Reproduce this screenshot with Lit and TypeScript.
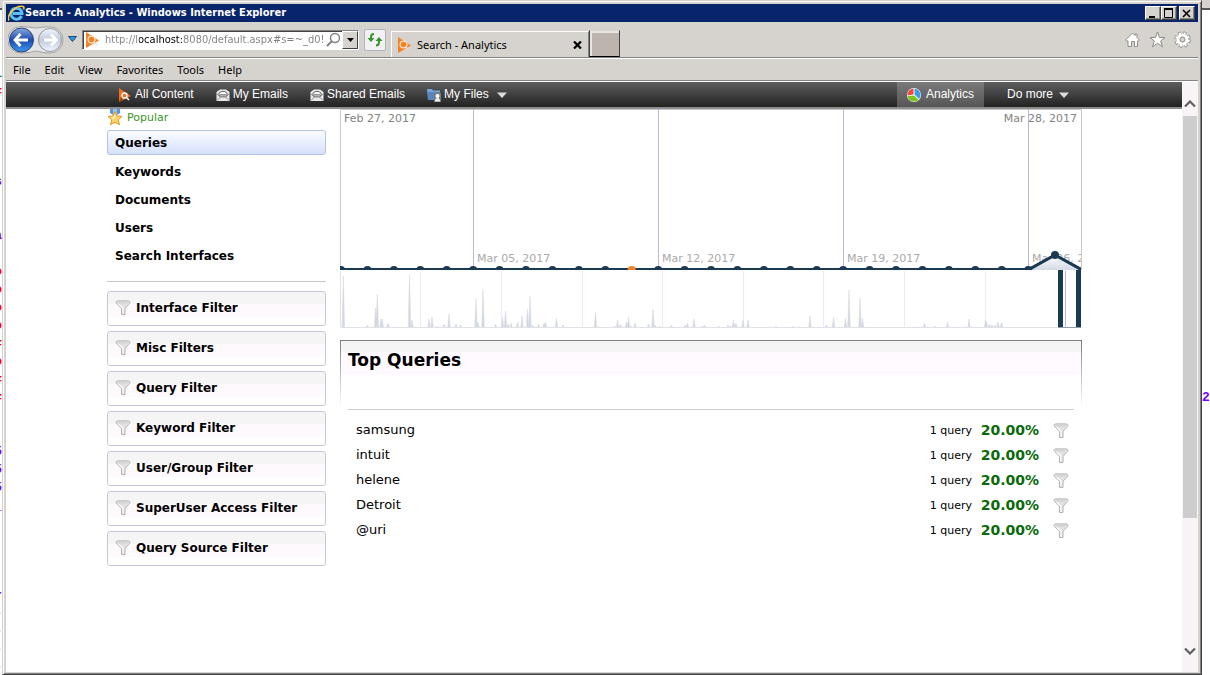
import { LitElement, html, svg, css } from "lit";
import { customElement, property } from "lit/decorators.js";

const base = css`
  *, *::before, *::after { box-sizing: border-box; }
  a { color: inherit; text-decoration: none; }
  button { font: inherit; color: inherit; border: 0; padding: 0; margin: 0; background: none; cursor: pointer; }
  svg { display: block; flex: none; }
  ul { list-style: none; margin: 0; padding: 0; }
`;

const brandMark = svg`
  <svg width="16" height="16" viewBox="0 0 16 16" aria-hidden="true">
    <path d="M1 0 L1 16 L14 8.5 Z" fill="#f58220"/>
    <circle cx="6.5" cy="7.5" r="3.4" fill="#f58220" stroke="#fde6d2" stroke-width="1.2"/>
    <path d="M9.500 5.500 Q12 7.500 9.500 9.500" fill="none" stroke="#f7c9a0"/>
    <path d="M9 10 L12 13" stroke="#ddd" stroke-width="1.3"/>
  </svg>`;

const funnel = svg`
  <svg width="16" height="16" viewBox="0 0 16 16" aria-hidden="true">
    <path d="M1 2.2 Q1 1 3 .9 L13 .9 Q15 1 15 2.2 Q14.6 4 10 8.2 L10 14.5 L6.5 14.5 L6.5 8.2 Q1.4 4 1 2.2 Z" fill="#e2e2e2" stroke="#b4b4b4"/>
    <path d="M3 2.2 L13 2.2 L11.5 3.6 L4.6 3.6 Z" fill="#cfcfcf"/>
    <path d="M3.6 4.4 L8 8 L8 13.4" fill="none" stroke="#fff" stroke-width="1.1"/>
  </svg>`;

const mailIcon = svg`
  <svg width="14" height="14" viewBox="0 0 14 14" aria-hidden="true">
    <path d="M.5 4 L4 1.5 H10 L13.5 4 V13 H.5 Z" fill="#e9e9e9"/>
    <path d="M3 5 Q7 1.6 11 5 V8 H3 Z" fill="#fff" stroke="#555" stroke-width=".9"/>
    <path d="M4 6.5 H10" stroke="#777" stroke-width=".8"/>
    <path d="M1 6 L4.5 9 L1 12.5 M13 6 L9.500 9 L13 12.5 M4.500 9 H9.500" fill="none" stroke="#777" stroke-width=".8"/>
  </svg>`;

const caret = svg`
  <svg width="10" height="6" viewBox="0 0 10 6" aria-hidden="true"><path d="M0 .5 H10 L5 6 Z" fill="#dcdcdc"/></svg>`;

const SPIKES: [number, number][] = [
  [3.3, 52], [27.5, 3], [35.6, 20], [37.3, 34], [41, 9], [42.3, 9], [48, 5], [69.5, 53], [72, 8], [89, 9], [92, 11],
  [97, 2], [104, 4], [109, 14], [116, 4], [120.5, 3], [136, 29], [138, 6], [143, 39], [155.5, 4], [162.500, 11],
  [165.500, 17], [168, 4], [171, 5], [177.500, 6], [182, 12], [187.500, 19], [190, 32], [193, 3], [198.500, 4], [204, 5],
  [205.500, 6], [216.500, 10], [223, 3], [252, 1], [255.500, 16], [275, 2], [277.500, 8], [280.500, 4], [286.500, 6],
  [288.500, 11], [291, 2], [295, 5], [308.500, 4], [313, 19], [315, 3], [319.500, 2], [331.500, 3], [345, 3],
  [347.500, 5], [354, 9], [362.500, 2], [364.500, 3], [379, 2], [388, 3], [390.500, 2], [393.500, 8], [396, 5],
  [403, 8], [408, 8], [436, 2], [452.500, 2], [459, 1], [470, 12], [486.500, 3], [493.500, 11], [505.500, 10],
  [509, 38], [520, 30], [522.500, 10], [526, 1], [579, 1], [584.500, 5], [588, 1], [595, 2], [607.500, 6], [625, 1],
  [629, 9], [645.500, 8], [646.500, 7], [649.500, 4], [652, 3], [655, 3], [658, 6], [661.500, 6],
];

@customElement("trend-chart")
class TrendChart extends LitElement {
  static styles = [base, css`
    :host { display: block; }
    .chart { width: 100%; height: auto; }
    .date { font: 11px "DejaVu Sans", Verdana, sans-serif; fill: #aaa; }
    .range { fill: #828282; }
  `];

  render() {
    const day = (k: number) => 1 + k * 26.43;
    const weeks: [number, string][] = [[5, "Mar 05, 2017"], [12, "Mar 12, 2017"], [19, "Mar 19, 2017"], [26, "Mar 26, 2017"]];
    const days = Array.from({ length: 27 }, (_, k) => k);
    return html`
      <svg class="chart" viewBox="0 0 742 219" role="img" aria-label="Queries per day">
        <defs>
          <clipPath id="plot"><rect x="0" y="0" width="741" height="161"/></clipPath>
          <linearGradient id="area" x1="0" y1="0" x2="0" y2="1">
            <stop offset="0" stop-color="#fff"/><stop offset="1" stop-color="#ccd4e0"/>
          </linearGradient>
        </defs>
        <path d="M.5 161 V.5 H741.5 V161" fill="none" stroke="#c8c8c8"/>
        <g clip-path="url(#plot)">
          ${weeks.map(([k, label]) => svg`
            <rect x=${Math.round(day(k))} y="0" width="1" height="160" fill="#bdb4e4"/>
            <text class="date" x=${Math.round(day(k)) + 4} y="153">${label}</text>`)}
          <path d="M689 161 L715 146 L741 161 Z" fill="url(#area)" fill-opacity=".85"/>
          <path d="M0 160 H689 L715 146 L741 160" fill="none" stroke="#1a3a54" stroke-width="2"/>
          <path d="M688 161 L715 146 L742 161" fill="none" stroke="#1a3a54" stroke-width="3"/>
          ${days.map((k) => svg`<circle cx=${day(k)} cy="161" r="4" fill=${k === 11 ? "#f58220" : "#1a3a54"}/>`)}
          <circle cx="715" cy="146" r="4" fill="#1a3a54"/>
        </g>
        <text class="date range" x="4" y="13">Feb 27, 2017</text>
        <text class="date range" x="737" y="13" text-anchor="end">Mar 28, 2017</text>
        ${[80, 161, 242, 322, 403, 483, 564, 645].map((x) => svg`<rect x=${x} y="162" width="1" height="57" fill="#ebe9fb"/>`)}
        <path d=${SPIKES.map(([x, h]) => `M${x - 1.3} 218.500 L${x} ${219 - h} L${x + 1.3} 218.500 Z`).join(" ")}
          fill="#d5d9e0" stroke="#d5d9e0" stroke-width=".5"/>
        <path d="M.5 162 V218.5 H718" fill="none" stroke="#e0e2e8"/>
        <rect x="725" y="162" width="1" height="57" fill="#bdb4e4"/>
        <rect x="718" y="161" width="5" height="58" fill="#1a3a54"/>
        <rect x="736" y="161" width="5" height="58" fill="#1a3a54"/>
        <path d="M718 218.500 H741" stroke="#8d9cab"/>
      </svg>`;
  }
}

@customElement("analytics-sidebar")
class AnalyticsSidebar extends LitElement {
  static styles = [base, css`
    :host { display: block; font: bold 12px/18px "DejaVu Sans", Verdana, sans-serif; }
    .popular { display: flex; align-items: center; gap: 4px; height: 17px; color: #3c9628; font: 11px/17px "DejaVu Sans", Verdana, sans-serif; }
    .views { margin-top: 4px; padding-bottom: 11px; border-bottom: 1px solid #c4c8d8; }
    .view { display: flex; align-items: center; height: 28px; padding: 0 8px; }
    .view.current { height: 25px; margin-bottom: 3px; padding: 0 7px; border: 1px solid #b4c2e4; border-radius: 3px; background: linear-gradient(#fbfcff, #d5e0fc); }
    .filters { display: grid; gap: 5px; margin-top: 9px; }
    .filter { display: flex; align-items: center; gap: 5px; width: 100%; height: 35px; padding: 0 7px 2px; border: 1px solid #c4c8d8; border-radius: 3px;
      background: linear-gradient(#f5f5f5 0 36%, #fdf9fd 36% 75%, #fff 75%); }
  `];

  render() {
    const views = ["Queries", "Keywords", "Documents", "Users", "Search Interfaces"];
    const filters = ["Interface Filter", "Misc Filters", "Query Filter", "Keyword Filter", "User/Group Filter", "SuperUser Access Filter", "Query Source Filter"];
    return html`
      <div class="popular">
        <svg width="16" height="17" viewBox="0 0 16 17" aria-hidden="true">
          <path d="M3 0 H13 V4 L8 7 L3 4 Z" fill="#5b93cc"/><path d="M6 0 H10 V5 H6 Z" fill="#9cc4ea"/>
          <path d="M8 2.500 L10 7 L15 7.500 L11.300 10.800 L12.500 15.800 L8 13.200 L3.500 15.800 L4.700 10.800 L1 7.500 L6 7 Z" fill="#fdd368" stroke="#e09a2c"/>
          <path d="M8 4.500 L8.800 8 L6 10.500 L4 8 L6.800 7.800 Z" fill="#fff0b8"/>
        </svg>
        Popular
      </div>
      <ul class="views">
        ${views.map((v, i) => html`<li><a class="view ${i === 0 ? "current" : ""}" href="#">${v}</a></li>`)}
      </ul>
      <div class="filters">
        ${filters.map((f) => html`<button class="filter">${funnel}<span>${f}</span></button>`)}
      </div>`;
  }
}

@customElement("top-queries")
class TopQueries extends LitElement {
  static styles = [base, css`
    :host { display: block; font: 13px/25px "DejaVu Sans", Verdana, sans-serif; }
    .head { height: 70px; padding: 0 8px; border-top: 1px solid #7d7d7d;
      background:
        linear-gradient(#7d7d7d, #fff) left top / 1px 66px no-repeat,
        linear-gradient(#7d7d7d, #fff) right top / 1px 66px no-repeat,
        linear-gradient(#f5f5f5 0 11px, #fefaff 11px 34px, #fff 34px); }
    .title { height: 69px; margin: 0; border-bottom: 1px solid #cfcfcf; font: bold 17px/38px "DejaVu Sans", Verdana, sans-serif; }
    .rows { width: 100%; margin-top: 8px; border-collapse: collapse; }
    .rows td { height: 25px; padding: 0; }
    .rows .query { padding: 0 0 2px 16px; line-height: 23px; }
    .rows .count { font-size: 11px; text-align: right; }
    .rows .share { width: 67px; font-size: 14px; font-weight: bold; text-align: right; color: #0a6a0a; }
    .rows .action { width: 43px; padding-left: 14px; }
    .action button { display: block; }
  `];

  render() {
    return html`
      <div class="head"><h2 class="title">Top Queries</h2></div>
      <table class="rows">
        <tbody>
          ${["samsung", "intuit", "helene", "Detroit", "@uri"].map((q) => html`
            <tr>
              <td class="query">${q}</td>
              <td class="count">1 query</td>
              <td class="share">20.00%</td>
              <td class="action"><button aria-label="Filter by ${q}">${funnel}</button></td>
            </tr>`)}
        </tbody>
      </table>`;
  }
}

@customElement("site-nav")
class SiteNav extends LitElement {
  static styles = [base, css`
    :host { display: block; border-bottom: 2px solid #8e8c8c; background: linear-gradient(#5e5e5e, #222); font: 12px/25px "Liberation Sans", Arial, sans-serif; color: #fff; }
    .inner { display: flex; align-items: stretch; max-width: 976px; height: 25px; margin: 0 auto; padding: 0 13px 0 12px; }
    .item { display: flex; align-items: center; gap: 3px; margin-right: 22px; }
    .item.menu { gap: 3px; }
    .menu .label { padding-right: 5px; }
    .spacer { flex: 1; }
    .item.active { gap: 5px; margin-right: 23px; padding: 0 10px; background: linear-gradient(#7a7a7a, #565656); }
    .more { display: flex; align-items: center; gap: 6px; }
    .item .label { padding-bottom: 1px; }
  `];

  render() {
    return html`
      <nav class="inner">
        <a class="item" href="#">
          <svg width="14" height="14" viewBox="0 0 14 14" aria-hidden="true">
            <path d="M1 0 V14 L13 8 Z" fill="#f07020"/><path d="M1 14 L5 12 L3 9 Z" fill="#a83c08"/>
            <circle cx="6.500" cy="7.500" r="2.500" fill="#f07020" stroke="#fff" stroke-width="1.300"/><path d="M8.500 9.500 L11 12" stroke="#fff" stroke-width="1.500"/>
          </svg>
          <span class="label">All Content</span></a>
        <a class="item" href="#">${mailIcon}<span class="label">My Emails</span></a>
        <a class="item" href="#">${mailIcon}<span class="label">Shared Emails</span></a>
        <a class="item menu" href="#">
          <svg width="14" height="14" viewBox="0 0 14 14" aria-hidden="true">
            <path d="M0 1 H5 L6 2.500 H13 V12 H1 Z" fill="#7ba4d4"/><path d="M1 4 H13 V12 H1 Z" fill="#5585c0"/>
            <rect x="7" y="5" width="7" height="9" fill="#7c7c7c"/><circle cx="10.500" cy="8" r="2" fill="#fff"/><path d="M8 13.500 Q8 10 10.500 10 Q13 10 13 13.500 Z" fill="#f2f2f2"/>
          </svg>
          <span class="label">My Files</span>${caret}</a>
        <span class="spacer"></span>
        <a class="item active" href="#">
          <svg width="14" height="14" viewBox="0 0 14 14" aria-hidden="true">
            <circle cx="7" cy="7" r="7" fill="#fff"/>
            <path d="M6.500 6.500 V.5 A6.500 6.500 0 0 0 .5 7.500 Z" fill="#ee4a38"/>
            <path d="M7.500 6.500 V.5 A6.500 6.500 0 0 1 12 11 Z" fill="#3f9be8"/>
            <path d="M.6 8.300 L7 7.500 L11.500 11.700 A6.500 6.500 0 0 1 .6 8.300 Z" fill="#7cc41c"/>
          </svg>
          <span class="label">Analytics</span></a>
        <a class="more" href="#"><span class="label">Do more</span>${caret}</a>
      </nav>`;
  }
}

@customElement("browser-chrome")
class BrowserChrome extends LitElement {
  static styles = [base, css`
    :host { display: block; font: 11px/14px "Tahoma", "Noto Sans", sans-serif; color: #000; background: #d6d3ce; }
    .title { display: flex; align-items: center; height: 18px; padding: 0 3px 0 2px; background: #08246b; color: #fff; }
    .title h1 { flex: 1; margin: 0; font: bold 11px/14px Tahoma, "DejaVu Sans Condensed", "DejaVu Sans", sans-serif; }
    .wbtn { width: 16px; height: 14px; border: 1px solid; border-color: #fff #424142 #424142 #fff; background: #d6d3ce; box-shadow: inset -1px -1px #848284; }
    .wbtn.close { margin-left: 2px; }
    .bar { display: flex; align-items: center; height: 36px; padding: 0 7px 0 2px; border-bottom: 1px solid #848284; }
    .travel { display: flex; }
    .hist { margin-left: 2px; }
    .address { display: flex; align-items: center; width: 277px; height: 20px; margin-left: 5px; padding-left: 2px; border: 1px solid; border-color: #848284 #fff #fff #848284; background: #fff; box-shadow: inset 1px 1px #424142; }
    .url { flex: 1; min-width: 0; height: 16px; margin-left: 4px; border: 0; padding: 0; outline: 0; font: 11px/16px Tahoma, "DejaVu Sans Condensed", "DejaVu Sans", sans-serif;
      background: linear-gradient(90deg, #808080 34px, #000 34px 77px, #808080 77px); -webkit-background-clip: text; background-clip: text; -webkit-text-fill-color: transparent; }
    .drop { display: grid; place-items: center; width: 16px; height: 18px; border: 1px solid; border-color: #fff #424142 #424142 #fff; background: #d6d3ce; }
    .refresh { display: grid; place-items: center; width: 22px; height: 22px; margin: 0 5px; border: 1px solid #b4b2b8; border-radius: 2px; background: #f2f1f4; }
    .tab { display: flex; align-items: center; gap: 4px; align-self: flex-end; width: 198px; height: 26px; padding: 0 6px 0 5px; border: 1px solid #fff; border-right-color: #848284; border-bottom: 0; }
    .tab a { flex: 1; }
    .newtab { align-self: flex-end; width: 31px; height: 27px; border: 1px solid; border-color: #d6d3ce #424142 #000 #424142; background: #bdb5ad; box-shadow: inset 2px 2px #e8e6e2; }
    .tools { display: flex; gap: 8px; margin-left: auto; }
    .menu { display: flex; gap: 14px; height: 24px; padding: 0 7px; border-top: 1px solid #fff; border-bottom: 1px solid #fff; line-height: 22px; box-shadow: inset 0 -1px #848284; }
  `];

  @property() heading = "";

  render() {
    return html`
      <header class="title">
        <svg width="17" height="17" viewBox="0 0 17 17" aria-hidden="true">
          <path d="M13.500 11 A5.500 5.500 0 1 1 14 8.500 H5" fill="none" stroke="#5cc0f4" stroke-width="3"/>
          <path d="M1 15.500 C-2 10 8 0 15 1.500 Q16.500 2 15.500 4.500" fill="none" stroke="#f8c838" stroke-width="1.600"/>
        </svg>
        <h1>${this.heading} - Windows Internet Explorer</h1>
        <button class="wbtn" aria-label="Minimize"><svg width="13" height="11"><rect x="3" y="8" width="6" height="2"/></svg></button>
        <button class="wbtn" aria-label="Maximize"><svg width="13" height="11"><path d="M2.500 1 V9.500 H10.500 V1" fill="none" stroke="#000"/><rect x="2" y="0" width="9" height="2"/></svg></button>
        <button class="wbtn close" aria-label="Close"><svg width="13" height="11"><path d="M3 2 L10 9 M10 2 L3 9" stroke="#000" stroke-width="1.600"/></svg></button>
      </header>
      <div class="bar">
        <div class="travel">
          <svg width="58" height="28" viewBox="0 0 58 28" role="img" aria-label="Back and forward">
            <defs>
              <linearGradient id="bk" x1="0" y1="0" x2="0" y2="1"><stop offset="0" stop-color="#8aa8e0"/><stop offset=".5" stop-color="#1c4cb0"/><stop offset="1" stop-color="#3c98ec"/></linearGradient>
              <linearGradient id="fw" x1="0" y1="0" x2="0" y2="1"><stop offset="0" stop-color="#f4f6fa"/><stop offset=".5" stop-color="#c0cad8"/><stop offset="1" stop-color="#f0f6fc"/></linearGradient>
            </defs>
            <path d="M13 .5 Q22 1 28 2 Q35 1 42 .8 A13 13 0 0 1 42 27 Q35 27 28 25 Q22 27 13 27 A13 13 0 0 1 13 .5 Z" fill="#e4e4e6" stroke="#a4a2a2"/>
            <circle cx="13.500" cy="14" r="12" fill="url(#bk)" stroke="#284478"/>
            <path d="M7 14 H20 M12.500 8 L7 14 L12.500 20" fill="none" stroke="#fff" stroke-width="2.800"/>
            <circle cx="42" cy="14" r="11.500" fill="url(#fw)" stroke="#9098a4"/>
            <path d="M36 14 H48 M43 8.500 L48.500 14 L43 19.500" fill="none" stroke="#fff" stroke-width="2.800"/>
          </svg>
        </div>
        <button class="hist" aria-label="Recent pages"><svg width="9" height="7" viewBox="0 0 9 7"><path d="M.5 .5 H8.500 L4.500 5.500 Z" fill="#2c9ce0" stroke="#184878"/></svg></button>
        <div class="address">
          ${brandMark}
          <input class="url" aria-label="Address" value="http://localhost:8080/default.aspx#s=~_d0!">
          <svg width="16" height="16" viewBox="0 0 16 16" aria-hidden="true"><circle cx="9" cy="6" r="4.500" fill="none" stroke="#848284" stroke-width="1.500"/><path d="M5.500 9.500 L1 14" stroke="#848284" stroke-width="2.200"/></svg>
          <button class="drop" aria-label="Show address history"><svg width="7" height="4"><path d="M0 0 H7 L3.500 4 Z"/></svg></button>
        </div>
        <button class="refresh" aria-label="Refresh">
          <svg width="16" height="16" viewBox="0 0 16 16"><path d="M7 2 Q4 2 4 5 V7 M9 13.500 Q12 13.500 12 10 V8" fill="none" stroke="#34942c" stroke-width="2"/><path d="M.5 6 H7.500 L4 10 Z M8.500 9 H15.500 L12 5 Z" fill="#34942c"/></svg>
        </button>
        <div class="tab">
          ${brandMark}
          <a href="#">${this.heading}</a>
          <button aria-label="Close tab"><svg width="9" height="8" viewBox="0 0 9 8"><path d="M1 .5 L8 7.500 M8 .5 L1 7.500" stroke="#000" stroke-width="2.200"/></svg></button>
        </div>
        <button class="newtab" aria-label="New tab"></button>
        <div class="tools">
          <button aria-label="Home"><svg width="17" height="17" viewBox="0 0 17 17"><path d="M1.500 9 L8.500 2 L11 4.500 V3 H13 V6.500 L15.500 9 L14.500 10 H13.500 V15.500 H10.500 V10.500 H7.500 V15.500 H4 V10 H2.500 Z" fill="#fff" stroke="#8c8a8a"/></svg></button>
          <button aria-label="Favorites"><svg width="17" height="17" viewBox="0 0 17 17"><path d="M8.500 1 L10.500 6.500 H16 L11.700 10 L13.500 15.800 L8.500 12.300 L3.500 15.800 L5.300 10 L1 6.500 H6.500 Z" fill="#fff" stroke="#8c8a8a"/></svg></button>
          <button aria-label="Settings"><svg width="17" height="17" viewBox="0 0 17 17">
            <circle cx="8.500" cy="8.500" r="6.500" fill="none" stroke="#8c8a8a" stroke-width="3.500" stroke-dasharray="3 2.105"/>
            <circle cx="8.500" cy="8.500" r="6.300" fill="none" stroke="#fff" stroke-width="2.200" stroke-dasharray="2 2.948" stroke-dashoffset="-.5"/>
            <circle cx="8.500" cy="8.500" r="4.200" fill="#d6d3ce" stroke="#fff" stroke-width="3"/><circle cx="8.500" cy="8.500" r="2.500" fill="#d6d3ce" stroke="#8c8a8a"/></svg></button>
        </div>
      </div>
      <nav class="menu">
        ${["File", "Edit", "View", "Favorites", "Tools", "Help"].map((m) => html`<button>${m}</button>`)}
      </nav>`;
  }
}

@customElement("app-root")
class AppRoot extends LitElement {
  static styles = [base, css`
    :host { display: flex; height: 100vh; min-height: 600px; overflow: hidden; background: #fff; }
    .behind { display: flex; flex-direction: column; flex: none; width: 2px; overflow: hidden; border-top: 8px solid #d6d3ce; font: bold 13px/18px "Liberation Mono", monospace; color: #8000ff; }
    .behind::before { content: ""; flex: none; height: 2px; background: #555; }
    .code { flex: none; display: flex; flex-direction: column; align-items: flex-end; padding-top: 55px; }
    .line { height: 18px; }
    .green { color: #008000; }
    .red { color: #f00; }
    .behind.right { width: 8px; }
    .right .code { align-items: flex-start; padding-top: 379px; }
    .window { display: flex; flex-direction: column; flex: 1; min-width: 0; padding: 3px 3px 2px; border: 1px solid; border-color: #d6d3ce #424142 #424142 #d6d3ce; background: #d6d3ce; box-shadow: inset 1px 1px #fff, inset -1px -1px #848284; }
    .body { display: flex; flex: 1; min-height: 0; background: #fff; }
    .page { flex: 1; min-width: 0; overflow: hidden; }
    .content { display: grid; grid-template-columns: 219px minmax(0, 1fr); gap: 14px; max-width: 976px; margin: 0 auto; padding-left: 1px; }
    .queries { margin-top: 12px; }
    .scroll { display: flex; flex-direction: column; width: 16px; padding: 0 1px; background: #f7f3f7; }
    .step { display: grid; flex: none; place-items: center; height: 34px; padding-top: 10px; }
    .step.down { padding: 0 0 8px; }
    .track { flex: 1; }
    .thumb { height: 77%; background: #cdcdcd; }
  `];

  render() {
    const lines: [string, string][] = [
      ["i", "green"], ["=", "red"], ["", ""], ["", ""], ["", ""], ["", ""], ["s", ""], ["", ""], ["", ""], ["a", ""], ["", ""],
      ["o", "red"], ["o", "red"], ["o", "red"], ["o", "red"], ["=", "red"], ["o", "red"], ["=", "red"], ["=", "red"],
      ["", ""], ["", ""], ["5", ""], ["5", ""], ["5", ""], ["_", ""], ["", ""], ["", ""], ["", ""], ["", ""], ["r", ""], ["-", ""], ["-", ""], ["-", ""], ["-", ""],
    ];
    return html`
      <div class="behind" aria-hidden="true">
        <div class="code">${lines.map(([t, c]) => html`<span class="line ${c}">${t}</span>`)}</div>
      </div>
      <div class="window">
        <browser-chrome heading="Search - Analytics"></browser-chrome>
        <div class="body">
          <div class="page">
            <site-nav></site-nav>
            <main class="content">
              <analytics-sidebar></analytics-sidebar>
              <section>
                <trend-chart></trend-chart>
                <top-queries class="queries"></top-queries>
              </section>
            </main>
          </div>
          <div class="scroll">
            <button class="step" aria-label="Scroll up"><svg width="12" height="8" viewBox="0 0 12 8"><path d="M1 6.500 L6 1.500 L11 6.500" fill="none" stroke="#606060" stroke-width="2.200"/></svg></button>
            <div class="track"><div class="thumb"></div></div>
            <button class="step down" aria-label="Scroll down"><svg width="12" height="8" viewBox="0 0 12 8"><path d="M1 1.500 L6 6.500 L11 1.500" fill="none" stroke="#606060" stroke-width="2.200"/></svg></button>
          </div>
        </div>
      </div>
      <div class="behind right" aria-hidden="true"><div class="code"><span class="line">2</span></div></div>`;
  }
}
